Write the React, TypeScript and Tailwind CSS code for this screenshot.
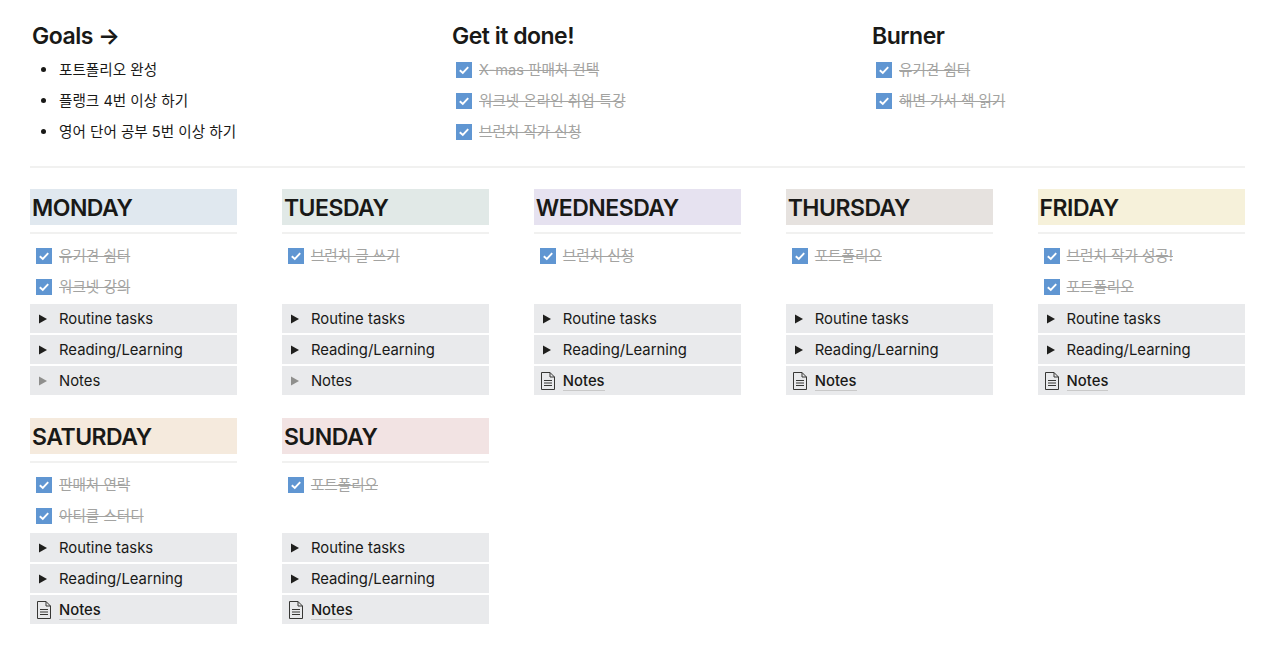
const font = { fontFamily: 'Inter, "Noto Sans CJK KR", sans-serif' };

interface Day {
  name: string;
  bg: string;
  tasks: string[];
  notesOpen: boolean;
}

const days: Day[] = [
  { name: 'MONDAY', bg: 'bg-[#e0e8ef]', tasks: ['유기견 쉼터', '워크넷 강의'], notesOpen: false },
  { name: 'TUESDAY', bg: 'bg-[#e1e9e7]', tasks: ['브런치 글 쓰기'], notesOpen: false },
  { name: 'WEDNESDAY', bg: 'bg-[#e6e2f0]', tasks: ['브런치 신청'], notesOpen: true },
  { name: 'THURSDAY', bg: 'bg-[#e6e2df]', tasks: ['포트폴리오'], notesOpen: true },
  { name: 'FRIDAY', bg: 'bg-[#f6f1da]', tasks: ['브런치 작가 성공!', '포트폴리오'], notesOpen: true },
  { name: 'SATURDAY', bg: 'bg-[#f5eadd]', tasks: ['판매처 연락', '아티클 스터디'], notesOpen: true },
  { name: 'SUNDAY', bg: 'bg-[#f2e3e3]', tasks: ['포트폴리오'], notesOpen: true },
];

function CheckRow({ text }: { text: string }) {
  return (
    <div className="flex h-[31px] items-center">
      <div className="ml-[6px] flex h-4 w-4 shrink-0 items-center justify-center bg-[#6096d2]">
        <svg width="12" height="12" viewBox="0 0 12 12" fill="none">
          <path d="M1.8 6.2 L4.8 9 L10.2 3.2" stroke="white" strokeWidth="1.9" />
        </svg>
      </div>
      <span className="ml-[7px] pt-[3px] text-[14.6px] text-[#a3a3a1] line-through">{text}</span>
    </div>
  );
}

function ToggleRow({ text, muted }: { text: string; muted?: boolean }) {
  return (
    <div className="flex h-[29px] items-center bg-[#e9eaec] pt-px">
      <svg className="ml-[8px] shrink-0" width="10" height="10" viewBox="0 0 10 10">
        <path d="M1 0.5 L9 5 L1 9.5 Z" fill={muted ? '#8f8f8d' : '#1f1f1d'} />
      </svg>
      <span className="ml-[11px] text-[14.85px] text-[#191917]">{text}</span>
    </div>
  );
}

function NotesPage() {
  return (
    <div className="flex h-[29px] items-center bg-[#e9eaec] pt-px">
      <svg className="ml-[7px] shrink-0" width="14" height="18" viewBox="0 0 14 18" fill="none" stroke="#373735" strokeWidth="1">
        <path d="M0.5 0.5 H9 L13.5 5 V17.5 H0.5 Z" />
        <path d="M9 0.5 V5 H13.5" />
        <path d="M3 8.5 H11 M3 11 H11 M3 13.5 H11" />
      </svg>
      <span className="ml-[8px] border-b border-[#c9c9c9] text-[14.85px] leading-[18px] font-medium text-[#191917]">Notes</span>
    </div>
  );
}

function DayCard({ day }: { day: Day }) {
  return (
    <div>
      <div className={`flex h-9 items-center px-[2px] pt-[2px] ${day.bg}`}>
        <span className="text-[23px] font-semibold tracking-[-0.5px] text-[#191917]">{day.name}</span>
      </div>
      <div className="mt-[7px] mb-[6px] h-[2px] bg-[#f1f1f0]" />
      <div className="min-h-[64px]">
        {day.tasks.map((t) => (
          <CheckRow key={t} text={t} />
        ))}
      </div>
      <div className="flex flex-col gap-[2px]">
        <ToggleRow text="Routine tasks" />
        <ToggleRow text="Reading/Learning" />
        {day.notesOpen ? <NotesPage /> : <ToggleRow text="Notes" muted />}
      </div>
    </div>
  );
}

function Heading({ text }: { text: string }) {
  return (
    <h2 className="flex h-[34px] items-center px-[2px] text-[23px] font-semibold tracking-[-0.5px] text-[#191917]">{text}</h2>
  );
}

export default function App() {
  return (
    <div className="h-[650px] w-[1280px] overflow-hidden bg-white px-[30px] pt-[19px]" style={font}>
      <div className="grid w-[1215px] grid-cols-3 gap-x-[45px]">
        <div>
          <Heading text="Goals →" />
          <ul className="mt-[1px]">
            {['포트폴리오 완성', '플랭크 4번 이상 하기', '영어 단어 공부 5번 이상 하기'].map((t) => (
              <li key={t} className="flex h-[31px] items-center">
                <span className="ml-[11px] h-[5px] w-[5px] rounded-full bg-[#191917]" />
                <span className="ml-[13px] pt-[3px] text-[14.6px] text-[#191917]">{t}</span>
              </li>
            ))}
          </ul>
        </div>
        <div>
          <Heading text="Get it done!" />
          <div className="mt-[1px]">
            {['X-mas 판매처 컨택', '워크넷 온라인 취업 특강', '브런치 작가 신청'].map((t) => (
              <CheckRow key={t} text={t} />
            ))}
          </div>
        </div>
        <div>
          <Heading text="Burner" />
          <div className="mt-[1px]">
            {['유기견 쉼터', '해변 가서 책 읽기'].map((t) => (
              <CheckRow key={t} text={t} />
            ))}
          </div>
        </div>
      </div>
      <div className="mt-[19px] h-[2px] w-[1215px] bg-[#f1f1f0]" />
      <div className="mt-[21px] grid w-[1215px] grid-cols-5 gap-x-[44.5px] gap-y-[23px]">
        {days.map((d) => (
          <DayCard key={d.name} day={d} />
        ))}
      </div>
    </div>
  );
}
